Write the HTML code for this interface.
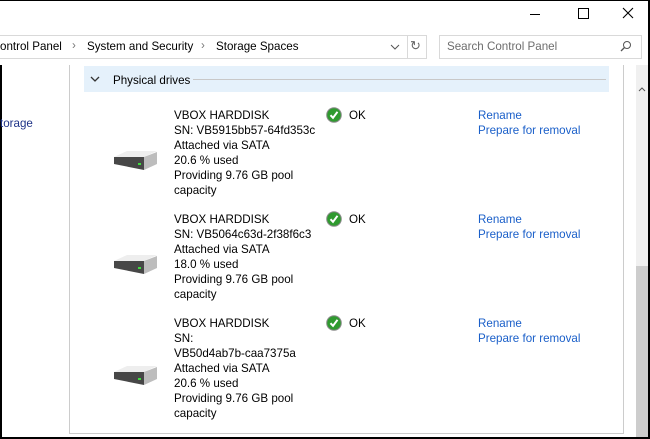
<!DOCTYPE html>
<html><head><style>
body{margin:0;width:650px;height:439px;overflow:hidden;background:#fff;font-family:"Liberation Sans",sans-serif;font-size:11.6px;color:#000;position:relative}
.a{position:absolute;white-space:nowrap}
.lnk{color:#1a5fc9}
.blk div{height:15px;line-height:15px}
</style></head><body>
<div class="a" style="left:0;top:0;width:650px;height:1px;background:#000"></div>
<div class="a" style="left:648px;top:0;width:2px;height:439px;background:#000"></div>
<div class="a" style="left:0;top:437px;width:650px;height:2px;background:#000"></div>
<div class="a" style="left:0;top:65px;width:2px;height:374px;background:#000"></div>
<div class="a" style="left:530px;top:14px;width:10px;height:1px;background:#000"></div>
<div class="a" style="left:578px;top:8px;width:9px;height:9px;border:1px solid #000"></div>
<svg class="a" style="left:622px;top:7px" width="12" height="12"><path d="M1 1L11 11M11 1L1 11" stroke="#000" stroke-width="1.1"/></svg>
<div class="a" style="left:-2px;top:35px;width:427px;height:22px;border:1px solid #d9d9d9"></div>
<div class="a" style="left:0;top:40px">ontrol Panel</div>
<div class="a" style="left:72px;top:39px;color:#777">›</div>
<div class="a" style="left:87px;top:40px">System and Security</div>
<div class="a" style="left:201px;top:39px;color:#777">›</div>
<div class="a" style="left:216px;top:40px">Storage Spaces</div>
<svg class="a" style="left:390px;top:43px" width="10" height="8"><path d="M1 2L5 6L9 2" stroke="#555" fill="none"/></svg>
<div class="a" style="left:407px;top:35px;width:1px;height:23px;background:#d9d9d9"></div>
<div class="a" style="left:410px;top:38px;color:#666;font-size:13px">↻</div>
<div class="a" style="left:439px;top:35px;width:201px;height:22px;border:1px solid #d9d9d9"></div>
<div class="a" style="left:447px;top:40px;color:#6d6d6d">Search Control Panel</div>
<svg class="a" style="left:620px;top:40px" width="12" height="12"><circle cx="7" cy="5" r="3.5" stroke="#555" fill="none"/><path d="M4.5 7.5L1 11" stroke="#555" stroke-width="1.3"/></svg>
<div class="a" style="left:0;top:117px;color:#1e3287">torage</div>
<div class="a" style="left:69px;top:65px;width:553px;height:368px;border-left:1px solid #ccc;border-right:1px solid #ccc;border-bottom:1px solid #ccc"></div>
<div class="a" style="left:84px;top:66px;width:525px;height:26px;background:#e5f1fb"></div>
<svg class="a" style="left:90px;top:75px" width="10" height="8"><path d="M1 2L5 6L9 2" stroke="#333" stroke-width="1.3" fill="none"/></svg>
<div class="a" style="left:113px;top:74px">Physical drives</div>
<div class="a" style="left:193px;top:79px;width:413px;height:1px;background:#c8c8c8"></div>
<div class="a" style="left:636px;top:65px;width:12px;height:372px;background:#f0f0f0"></div>
<div class="a" style="left:636px;top:266px;width:12px;height:171px;background:#cdcdcd"></div>
<svg class="a" style="left:638px;top:86px" width="8" height="6"><path d="M1 5L4 2L7 5" stroke="#555" fill="none"/></svg>

<div class="a blk" style="left:174px;top:108px">
<div>VBOX HARDDISK</div><div>SN: VB5915bb57-64fd353c</div><div>Attached via SATA</div><div>20.6 % used</div><div>Providing 9.76 GB pool</div><div>capacity</div></div>
<div class="a blk" style="left:174px;top:212px">
<div>VBOX HARDDISK</div><div>SN: VB5064c63d-2f38f6c3</div><div>Attached via SATA</div><div>18.0 % used</div><div>Providing 9.76 GB pool</div><div>capacity</div></div>
<div class="a blk" style="left:174px;top:316px">
<div>VBOX HARDDISK</div><div>SN:</div><div>VB50d4ab7b-caa7375a</div><div>Attached via SATA</div><div>20.6 % used</div><div>Providing 9.76 GB pool</div><div>capacity</div></div>

<div class="a blk" style="left:349px;top:108px"><div>OK</div></div>
<div class="a blk" style="left:349px;top:212px"><div>OK</div></div>
<div class="a blk" style="left:349px;top:316px"><div>OK</div></div>

<div class="a blk lnk" style="left:478px;top:108px"><div>Rename</div><div>Prepare for removal</div></div>
<div class="a blk lnk" style="left:478px;top:212px"><div>Rename</div><div>Prepare for removal</div></div>
<div class="a blk lnk" style="left:478px;top:316px"><div>Rename</div><div>Prepare for removal</div></div>

<svg class="a" style="left:326px;top:107px" width="16" height="16"><circle cx="8" cy="8" r="7.3" fill="#2f9a2f" stroke="#8a8a8a"/><path d="M4.5 8.2L7 10.8L11.5 4.8" stroke="#fff" stroke-width="2" fill="none"/></svg>
<svg class="a" style="left:326px;top:211px" width="16" height="16"><circle cx="8" cy="8" r="7.3" fill="#2f9a2f" stroke="#8a8a8a"/><path d="M4.5 8.2L7 10.8L11.5 4.8" stroke="#fff" stroke-width="2" fill="none"/></svg>
<svg class="a" style="left:326px;top:315px" width="16" height="16"><circle cx="8" cy="8" r="7.3" fill="#2f9a2f" stroke="#8a8a8a"/><path d="M4.5 8.2L7 10.8L11.5 4.8" stroke="#fff" stroke-width="2" fill="none"/></svg>

<svg class="a" style="left:113px;top:150px" width="46" height="22"><path d="M14 1L44 1L31 7L1 7Z" fill="#eee"/><path d="M1 7L31 7L31 20L1 14Z" fill="#474747"/><path d="M31 7L44 2L44 14L31 20Z" fill="#bdbdbd"/><rect x="25" y="13" width="3" height="2" fill="#3fdc3f"/></svg>
<svg class="a" style="left:113px;top:254px" width="46" height="22"><path d="M14 1L44 1L31 7L1 7Z" fill="#eee"/><path d="M1 7L31 7L31 20L1 14Z" fill="#474747"/><path d="M31 7L44 2L44 14L31 20Z" fill="#bdbdbd"/><rect x="25" y="13" width="3" height="2" fill="#3fdc3f"/></svg>
<svg class="a" style="left:113px;top:365px" width="46" height="22"><path d="M14 1L44 1L31 7L1 7Z" fill="#eee"/><path d="M1 7L31 7L31 20L1 14Z" fill="#474747"/><path d="M31 7L44 2L44 14L31 20Z" fill="#bdbdbd"/><rect x="25" y="13" width="3" height="2" fill="#3fdc3f"/></svg>
</body></html>
